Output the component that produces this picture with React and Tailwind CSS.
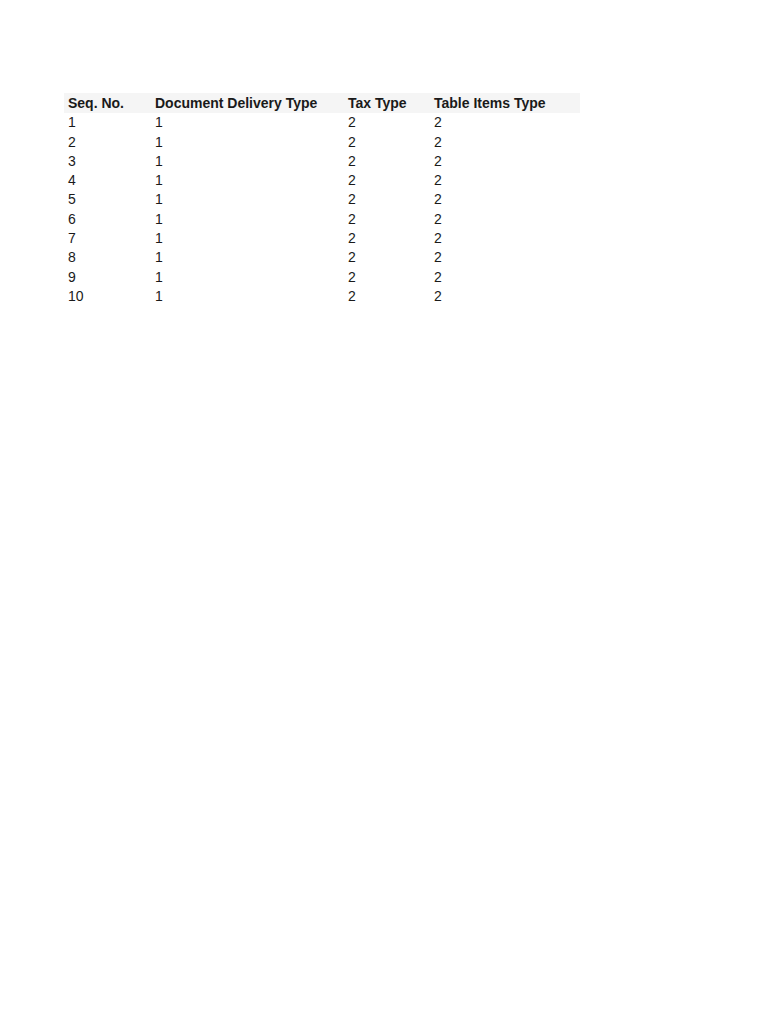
import React from 'react';

const rows = Array.from({ length: 10 }, (_, i) => ({ seq: i + 1, delivery: 1, tax: 2, items: 2 }));

function App() {
  return (
    <div className="min-h-screen bg-white pt-[93px] pl-[64px] text-[14px] text-[#1a1a1a]" style={{ fontFamily: '"Liberation Sans", Arial, sans-serif' }}>
      <div className="w-[516px]">
        <div className="flex h-[20px] items-center bg-[#f5f5f5] font-bold">
          <div className="w-[87px] pl-[4px]">Seq. No.</div>
          <div className="w-[193px] pl-[4px]">Document Delivery Type</div>
          <div className="w-[86px] pl-[4px]">Tax Type</div>
          <div className="flex-1 pl-[4px]">Table Items Type</div>
        </div>
        {rows.map((r) => (
          <div key={r.seq} className="flex h-[19.33px] items-center">
            <div className="w-[87px] pl-[4px]">{r.seq}</div>
            <div className="w-[193px] pl-[4px]">{r.delivery}</div>
            <div className="w-[86px] pl-[4px]">{r.tax}</div>
            <div className="flex-1 pl-[4px]">{r.items}</div>
          </div>
        ))}
      </div>
    </div>
  );
}

export default App;
